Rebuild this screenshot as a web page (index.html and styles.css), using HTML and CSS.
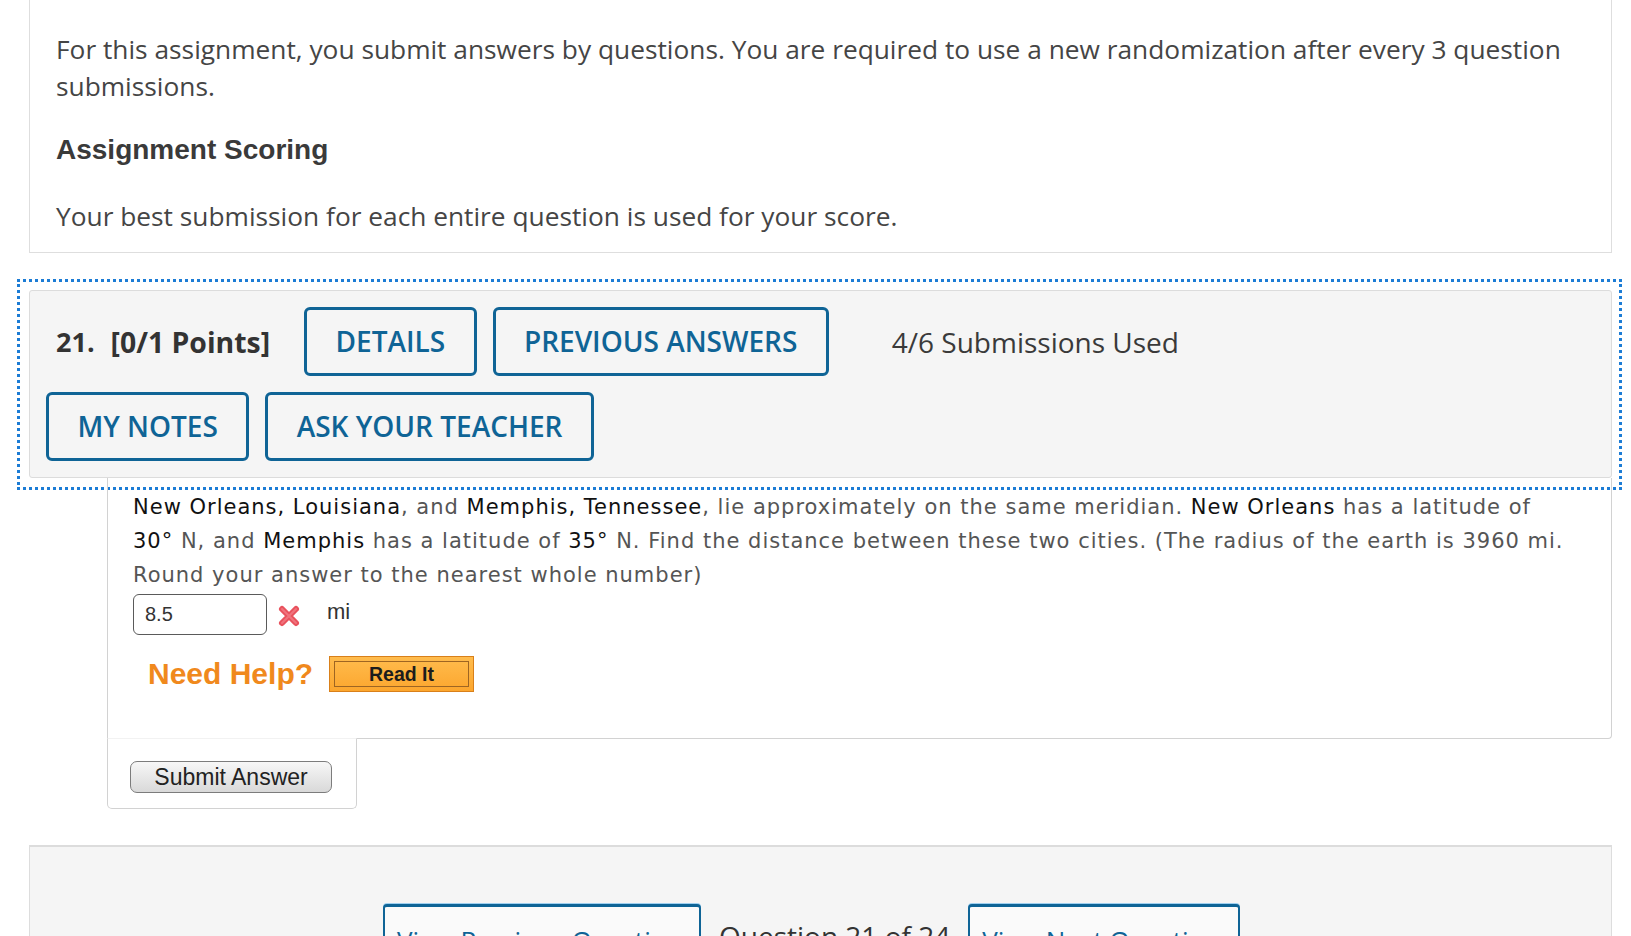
FILE: index.html
```html
<!DOCTYPE html>
<html lang="en">
<head>
<meta charset="utf-8">
<title>Assignment Question 21</title>
<link rel="stylesheet" href="styles.css">
</head>
<body>
<div class="page">
  <section class="intro-card">
    <p class="intro-text">For this assignment, you submit answers by questions. You are required to use a new randomization after every 3 question submissions.</p>
    <h3 class="intro-heading">Assignment Scoring</h3>
    <p class="intro-text">Your best submission for each entire question is used for your score.</p>
  </section>

  <div class="focus-wrap">
    <div class="q-header">
      <div class="q-row">
        <span class="q-num">21.</span>
        <span class="q-points">[0/1 Points]</span>
        <button class="btn-outline btn-details">DETAILS</button>
        <button class="btn-outline btn-prev">PREVIOUS ANSWERS</button>
        <span class="q-submissions">4/6 Submissions Used</span>
      </div>
      <div class="q-row">
        <button class="btn-outline btn-notes">MY NOTES</button>
        <button class="btn-outline">ASK YOUR TEACHER</button>
      </div>
    </div>
  </div>

  <div class="q-body-wrap">
    <div class="q-body">
      <p class="q-text"><span class="dark">New Orleans, Louisiana</span>, and <span class="dark">Memphis, Tennessee</span>, lie approximately on the same meridian. <span class="dark">New Orleans</span> has a latitude of <span class="dark">30°</span> N, and <span class="dark">Memphis</span> has a latitude of <span class="dark">35°</span> N. Find the distance between these two cities. (The radius of the earth is 3960 mi. Round your answer to the nearest whole number)</p>
      <div class="answer-row">
        <input class="answer-input" type="text" value="8.5">
        <svg class="wrong-icon" width="24" height="24" viewBox="0 0 24 24" aria-hidden="true">
          <path d="M5 5 L19 19 M19 5 L5 19" stroke="#e9525d" stroke-width="6" stroke-linecap="round" fill="none"/>
          <path d="M5 5 L19 19 M19 5 L5 19" stroke="#f58a92" stroke-width="2" stroke-linecap="round" fill="none" opacity="0.6"/>
        </svg>
        <span class="unit">mi</span>
      </div>
      <div class="help-row">
        <span class="need-help">Need Help?</span>
        <span class="read-it"><span class="read-it-inner">Read It</span></span>
      </div>
    </div>
    <div class="submit-tab">
      <button class="submit-btn">Submit Answer</button>
    </div>
  </div>

  <nav class="nav-panel">
    <button class="nav-btn nav-prev">View Previous Question</button>
    <span class="nav-label">Question 21 of 24</span>
    <button class="nav-btn nav-next">View Next Question</button>
  </nav>
</div>
</body>
</html>
```

FILE: styles.css
```css
* {
  box-sizing: border-box;
}

html, body {
  margin: 0;
  padding: 0;
  background: #ffffff;
  overflow: hidden;
}

body {
  font-family: "Open Sans", "Liberation Sans", sans-serif;
  color: #333333;
}

.page {
  height: 936px;
}

/* ---------- intro card ---------- */
.intro-card {
  margin: 0 19px 0 29px;
  border: 1px solid #dedede;
  border-top: none;
  padding: 31px 26px 17px 26px;
  background: #ffffff;
}

.intro-text {
  margin: 0;
  font-size: 26.3px;
  line-height: 37px;
  color: #454545;
}

.intro-heading {
  margin: 29px 0 33px;
  font-family: "Liberation Sans", Arial, sans-serif;
  font-weight: bold;
  font-size: 28px;
  line-height: 31px;
  color: #3a3a3a;
}

/* ---------- question header ---------- */
.focus-wrap {
  margin: 26px 9px 0 17px;
  border: 3px dotted #1c7cd5;
  padding: 8px 7px 9px 9px;
}

.q-header {
  background: #f5f5f5;
  border: 1px solid #dcdcdc;
  border-radius: 3px;
  padding: 16px;
}

.q-row {
  display: flex;
  align-items: center;
}

.q-row + .q-row {
  margin-top: 16px;
}

.q-num {
  margin-left: 10px;
  margin-right: 16px;
  font-weight: 700;
  font-size: 27px;
  color: #333333;
}

.q-points {
  margin-right: 34px;
  font-weight: 700;
  font-size: 28.4px;
  color: #333333;
}

.btn-outline {
  font-family: "Open Sans", "Liberation Sans", sans-serif;
  font-weight: 600;
  font-size: 28px;
  line-height: 39px;
  color: #0f6496;
  background: transparent;
  border: 3px solid #0f6496;
  border-radius: 6px;
  padding: 12px 28.4px;
  margin: 0;
}

.btn-details,
.btn-notes {
  margin-right: 16px;
}

.btn-prev {
  margin-right: 63px;
}

.q-submissions {
  font-size: 28px;
  color: #3a3a3a;
}

/* ---------- question body ---------- */
.q-body-wrap {
  margin: -12px 19px 0 107px;
}

.q-body {
  border: 1px solid #d2d2d2;
  border-top: none;
  border-radius: 0 0 4px 0;
  padding: 12px 40px 46px 25px;
}

.q-text {
  margin: 0;
  font-family: "DejaVu Sans", Verdana, sans-serif;
  font-size: 21px;
  letter-spacing: 1px;
  line-height: 34px;
  color: #555555;
}

.q-text .dark {
  color: #111111;
}

.answer-row {
  display: flex;
  align-items: center;
  margin-top: 2px;
}

.answer-input {
  width: 134px;
  height: 41px;
  border: 1px solid #5a5a5a;
  border-radius: 6px;
  padding: 0 0 0 11px;
  font-family: "Liberation Sans", Arial, sans-serif;
  font-size: 20px;
  color: #333333;
  background: #ffffff;
}

.wrong-icon {
  margin-left: 10px;
  margin-top: 2px;
}

.unit {
  margin-left: 26px;
  margin-top: -6px;
  font-family: "Liberation Sans", Arial, sans-serif;
  font-size: 22px;
  color: #333333;
}

.help-row {
  display: flex;
  align-items: center;
  margin-top: 21px;
  height: 36px;
}

.need-help {
  margin-left: 15px;
  font-family: "Liberation Sans", Arial, sans-serif;
  font-weight: bold;
  font-size: 30px;
  color: #f0891d;
}

.read-it {
  margin-left: 16px;
  width: 145px;
  height: 36px;
  border: 1px solid #d9801a;
  background: linear-gradient(#ffbc4d, #fca62e);
  padding: 4px;
  display: flex;
}

.read-it-inner {
  flex: 1;
  border: 1px solid #9e6522;
  display: flex;
  align-items: center;
  justify-content: center;
  font-family: "Liberation Sans", Arial, sans-serif;
  font-weight: bold;
  font-size: 19.5px;
  color: #1c1c1c;
}

.submit-tab {
  width: 250px;
  margin-top: -1px;
  border: 1px solid #d2d2d2;
  border-top: 1px solid #f2f2f2;
  border-radius: 0 0 5px 5px;
  padding: 22px 0 15px 22px;
}

.submit-btn {
  width: 202px;
  height: 32px;
  margin: 0;
  padding: 0;
  border: 1px solid #7c7c7c;
  border-radius: 7px;
  background: linear-gradient(#f7f7f7, #d9d9d9);
  font-family: "Liberation Sans", Arial, sans-serif;
  font-size: 23px;
  color: #222222;
}

/* ---------- navigation panel ---------- */
.nav-panel {
  margin: 36px 19px 0 29px;
  height: 93px;
  overflow: hidden;
  background: #f5f5f5;
  border: 1px solid #dddddd;
  border-top: 2px solid #dcdcdc;
  border-bottom: none;
  padding: 57px 0 0 353px;
  display: flex;
  align-items: flex-start;
  gap: 18px;
}

.nav-btn {
  margin: 0;
  height: 60px;
  font-family: "Open Sans", "Liberation Sans", sans-serif;
  font-size: 26px;
  line-height: 36px;
  color: #0f6496;
  background: #fafafa;
  border: 2px solid #0f6496;
  border-top: 3px solid #0f6496;
  border-radius: 4px 4px 0 0;
  box-shadow: 0 -1px 0 #9fd0f0;
  padding: 10px 0 0 12px;
  text-align: left;
  white-space: nowrap;
}

.nav-prev {
  width: 318px;
}

.nav-next {
  width: 272px;
}

.nav-label {
  padding-top: 13px;
  font-size: 28px;
  line-height: 38px;
  color: #333333;
}
```
